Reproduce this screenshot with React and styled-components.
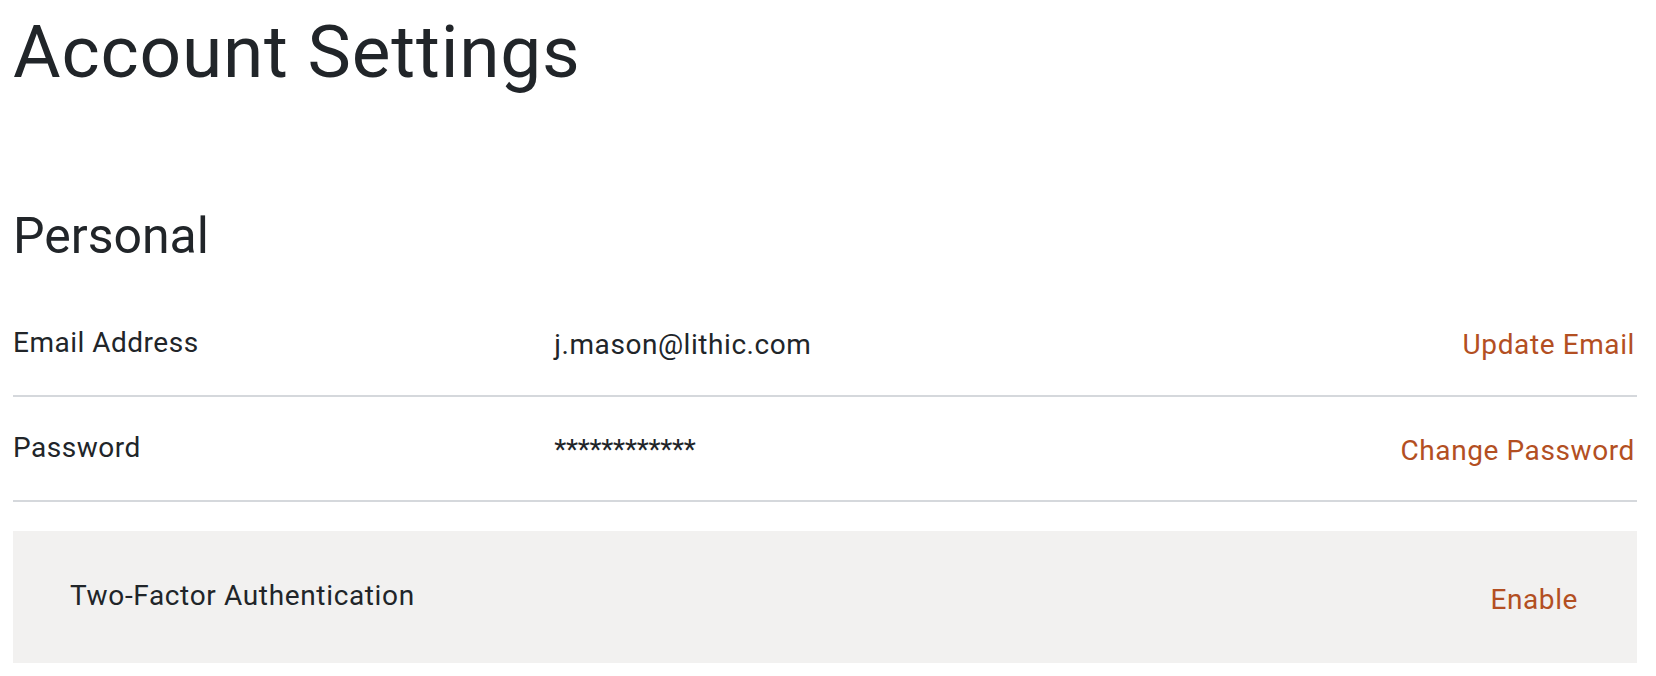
import React from "react";
import styled, { createGlobalStyle } from "styled-components";

const GlobalStyle = createGlobalStyle`
  html, body {
    margin: 0;
    padding: 0;
    background: #ffffff;
  }

  body {
    font-family: Roboto, "Liberation Sans", sans-serif;
    color: #212529;
  }
`;

const Page = styled.main`
  padding: 9px 19px 0 13px;
`;

const Title = styled.h1`
  margin: 0;
  font-size: 73px;
  font-weight: 400;
  line-height: 1.2;
  letter-spacing: 0.8px;
`;

const SectionTitle = styled.h2`
  margin: 109px 0 26px;
  font-size: 50px;
  font-weight: 400;
  line-height: 1.2;
`;

const Row = styled.div`
  display: grid;
  grid-template-columns: 1fr 1fr 1fr;
  align-items: start;
  padding: 30px 0 31px;
  border-bottom: 2px solid #d5d8dc;
  font-size: 28px;
  line-height: 42px;
  letter-spacing: 0.5px;
`;

const Label = styled.div``;

// value and action sit a few pixels lower than the label in the design
const Value = styled.div`
  padding-top: 2px;
  margin-bottom: -2px;
  letter-spacing: ${(p) => (p.masked ? "-0.3px" : "0.55px")};
`;

const Action = styled.a`
  justify-self: end;
  padding-top: ${(p) => p.offset || 2}px;
  margin-bottom: -${(p) => p.offset || 2}px;
  margin-right: ${(p) => p.inset || 0}px;
  color: #b34f22;
  text-decoration: none;
  letter-spacing: 0.6px;
  cursor: pointer;
`;

const Feature = styled.div`
  margin-top: 29px;
  height: 132px;
  box-sizing: border-box;
  padding: 0 59px 0 57px;
  display: flex;
  align-items: center;
  justify-content: space-between;
  background: #f2f1f0;
  font-size: 28px;
  line-height: 42px;
  letter-spacing: 0.65px;
`;

const FeatureName = styled.span`
  margin-top: -2px;
`;

const rows = [
  { label: "Email Address", value: "j.mason@lithic.com", action: "Update Email", offset: 2 },
  { label: "Password", value: "************", action: "Change Password", masked: true, offset: 3 },
];

export default function App() {
  return (
    <>
      <GlobalStyle />
      <Page>
        <Title>Account Settings</Title>
        <SectionTitle>Personal</SectionTitle>
        {rows.map((row) => (
          <Row key={row.label}>
            <Label>{row.label}</Label>
            <Value masked={row.masked}>{row.value}</Value>
            <Action offset={row.offset} inset={2}>
              {row.action}
            </Action>
          </Row>
        ))}
        <Feature>
          <FeatureName>Two-Factor Authentication</FeatureName>
          <Action offset={3}>Enable</Action>
        </Feature>
      </Page>
    </>
  );
}
